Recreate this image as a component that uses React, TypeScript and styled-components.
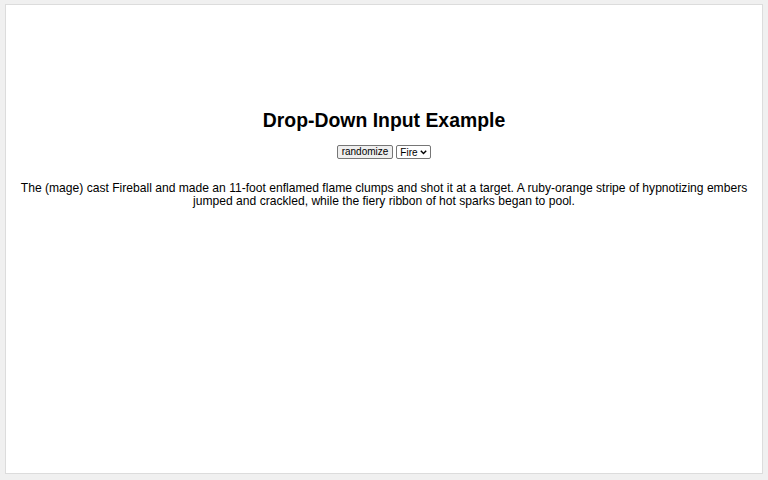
import React, { useState } from "react";
import styled, { createGlobalStyle } from "styled-components";

const Global = createGlobalStyle`
  html, body { margin: 0; padding: 0; height: 100%; }
  body {
    background: #f0f0f0;
    font-family: "Liberation Sans", Arial, sans-serif;
    color: #000;
  }
  #root { height: 100%; }
`;

const Page = styled.div`
  box-sizing: border-box;
  height: 480px;
  padding: 4px 5px 6px 5px;
  display: flex;
`;

const Card = styled.main`
  flex: 1;
  background: #fff;
  border: 1px solid #dcdcdc;
  padding: 0 14px;
  display: flex;
  flex-direction: column;
  align-items: center;
  text-align: center;
`;

const Title = styled.h1`
  margin: 101px 0 0 0;
  font-size: 19.4px;
  font-weight: bold;
  line-height: 28px;
`;

const Controls = styled.div`
  margin-top: 11px;
  display: flex;
  align-items: center;
  gap: 3px;
`;

const Button = styled.button`
  font-family: "Liberation Sans", Arial, sans-serif;
  font-size: 10px;
  height: 14px;
  padding: 0 4px;
  border: 1px solid #767676;
  border-radius: 2px;
  background: #efefef;
  color: #000;
  line-height: 1;
`;

const SelectWrap = styled.span`
  position: relative;
  display: inline-flex;
`;

const Select = styled.select`
  appearance: none;
  -webkit-appearance: none;
  font-family: "Liberation Sans", Arial, sans-serif;
  font-size: 10px;
  height: 14px;
  width: 35px;
  padding: 0 0 0 3px;
  border: 1px solid #767676;
  border-radius: 2px;
  background: #fff;
  color: #000;
`;

const Chevron = styled.svg`
  position: absolute;
  right: 4px;
  top: 5px;
  pointer-events: none;
`;

const Story = styled.p`
  margin: 23px 0 0 0;
  font-size: 12.1px;
  line-height: 13px;
`;

const elements = ["Fire", "Water", "Earth", "Air"];

export default function App() {
  const [element, setElement] = useState("Fire");
  return (
    <>
      <Global />
      <Page>
        <Card>
          <Title>Drop-Down Input Example</Title>
          <Controls>
            <Button
              onClick={() =>
                setElement(elements[Math.floor(Math.random() * elements.length)])
              }
            >
              randomize
            </Button>
            <SelectWrap>
              <Select value={element} onChange={(e) => setElement(e.target.value)}>
                {elements.map((el) => (
                  <option key={el} value={el}>
                    {el}
                  </option>
                ))}
              </Select>
              <Chevron width="7" height="5" viewBox="0 0 7 5">
                <path d="M0.8 0.8 L3.5 3.6 L6.2 0.8" fill="none" stroke="#000" strokeWidth="1.4" />
              </Chevron>
            </SelectWrap>
          </Controls>
          <Story>
            The (mage) cast Fireball and made an 11-foot enflamed flame clumps and
            shot it at a target. A ruby-orange stripe of hypnotizing embers jumped
            and crackled, while the fiery ribbon of hot sparks began to pool.
          </Story>
        </Card>
      </Page>
    </>
  );
}
